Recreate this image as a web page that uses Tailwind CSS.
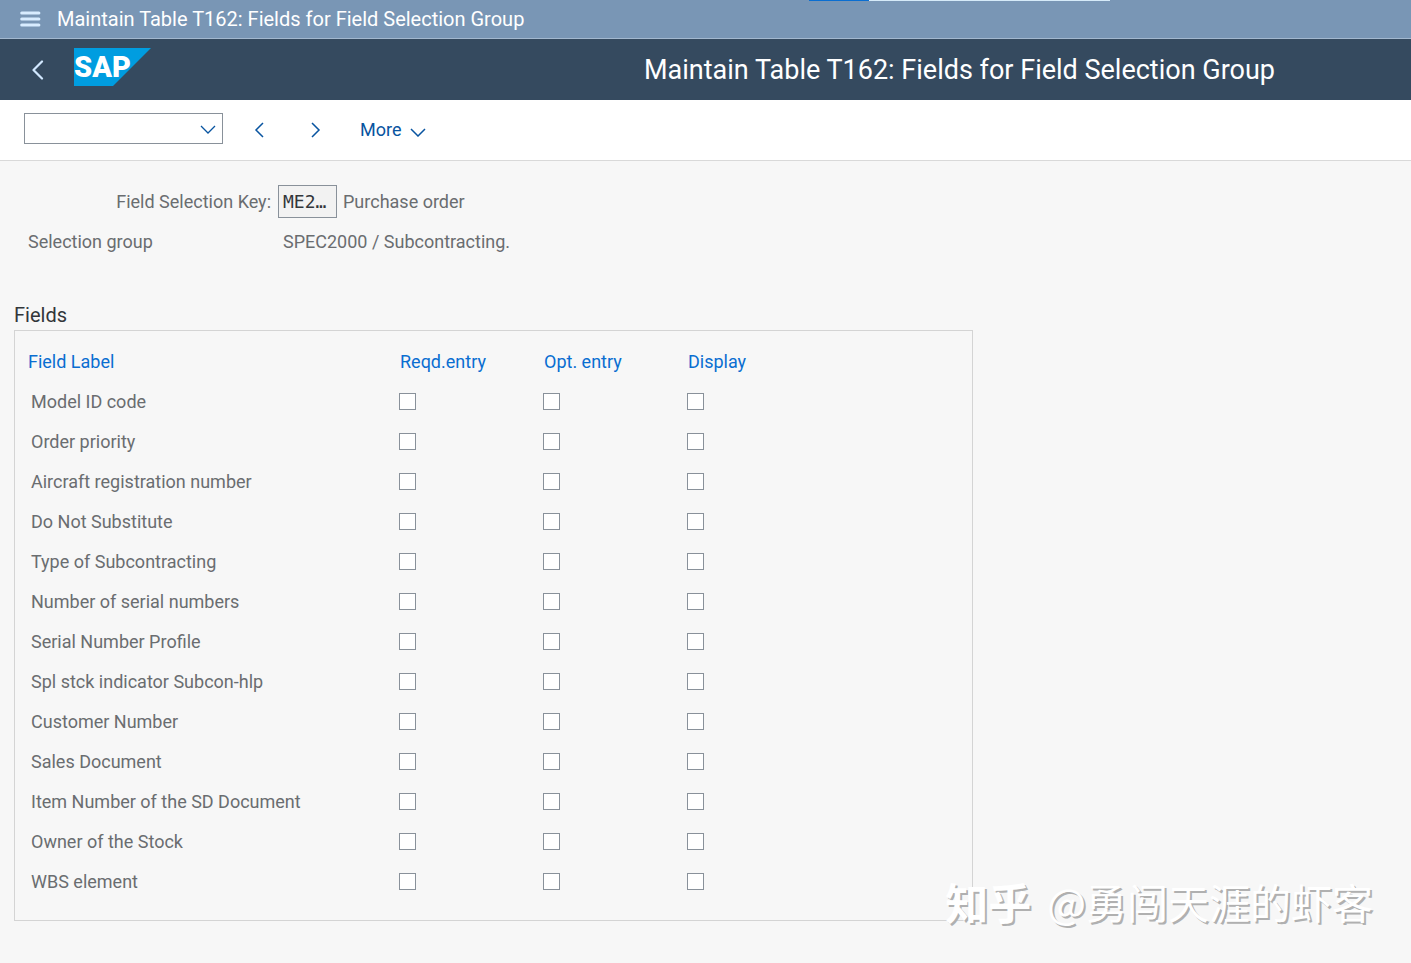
<!DOCTYPE html>
<html lang="en">
<head>
  <meta charset="UTF-8" />
  <meta name="viewport" content="width=device-width, initial-scale=1" />
  <title>Maintain Table T162: Fields for Field Selection Group</title>
  <script src="https://cdn.jsdelivr.net/npm/@tailwindcss/browser@4"></script>
</head>
<body class="bg-[#f7f7f7] min-h-screen font-['Roboto',sans-serif] text-lg leading-6 text-[#6a6d70]">

  <!-- Shell bar -->
  <div class="relative h-[39px] flex items-center gap-4 pl-5 bg-[#7996b5] border-b border-[#a3b8cf] text-white">
    <button type="button" aria-label="Menu" class="w-[21px]">
      <svg class="w-[21px] h-4" viewBox="0 0 21 16" fill="none" stroke="#d8ecff" stroke-width="3" stroke-linecap="round">
        <path d="M1.7 2h17.2M1.7 8h17.2M1.7 14h17.2" />
      </svg>
    </button>
    <span class="text-[20px]">Maintain Table T162: Fields for Field Selection Group</span>
    <div class="absolute top-0 left-[809px] flex">
      <div class="w-[60px] h-px bg-[#0a6ed1]"></div>
      <div class="w-[241px] h-px bg-[#d5eaf8]"></div>
    </div>
  </div>

  <!-- Header -->
  <header class="h-[61px] flex items-center bg-[#354a5f] text-white pl-7 pr-[132px]">
    <button type="button" aria-label="Back" class="w-5 h-6 flex items-center justify-center">
      <svg class="w-5 h-5" viewBox="0 0 20 20" fill="none" stroke="#d1e8ff" stroke-width="2.2" stroke-linecap="round" stroke-linejoin="round">
        <path d="M14 1.5L5.500 10L14 18.500" />
      </svg>
    </button>
    <svg class="ml-[26px] -mt-[6px] w-[77px] h-[38px]" viewBox="0 0 77 38" role="img" aria-label="SAP">
      <path d="M0 0h77L39 38H0z" fill="#009de0" />
      <text x="0" y="29" fill="#fff" class="font-['Roboto',sans-serif] font-black text-[29px]">SAP</text>
    </svg>
    <h1 class="ml-auto pr-1 text-[27px] leading-8">Maintain Table T162: Fields for Field Selection Group</h1>
  </header>

  <!-- Toolbar -->
  <div class="h-[61px] flex items-center bg-white border-b border-[#d9d9d9] pl-6 text-[#0854a0]">
    <div class="relative -mt-1">
      <select aria-label="Command" class="block appearance-none w-[199px] h-[31px] border border-[#89919a] bg-white px-2">
        <option></option>
      </select>
      <svg class="absolute right-[7px] top-3 w-4 h-[9px] pointer-events-none" viewBox="0 0 16 9" fill="none" stroke="currentColor" stroke-width="1.300">
        <path d="M1 1l7 7l7-7" />
      </svg>
    </div>
    <button type="button" aria-label="Previous" class="ml-[31px]">
      <svg class="w-[10px] h-4" viewBox="0 0 10 16" fill="none" stroke="currentColor" stroke-width="1.500">
        <path d="M9 1L2 8l7 7" />
      </svg>
    </button>
    <button type="button" aria-label="Next" class="ml-[47px]">
      <svg class="w-[10px] h-4" viewBox="0 0 10 16" fill="none" stroke="currentColor" stroke-width="1.500">
        <path d="M1 1l7 7l-7 7" />
      </svg>
    </button>
    <button type="button" class="ml-[39px] flex items-center gap-[9px]">
      More
      <svg class="mt-1 w-4 h-[9px]" viewBox="0 0 16 9" fill="none" stroke="currentColor" stroke-width="1.500">
        <path d="M1 1l7 7l7-7" />
      </svg>
    </button>
  </div>

  <main class="pl-[14px] pr-4 pt-5 pb-10">
    <div class="flex items-center h-[41px]">
      <label for="field-key" class="w-[257px] text-right">Field Selection Key:</label>
      <input id="field-key" type="text" readonly value="ME2…"
        class="ml-[7px] w-[59px] h-[33px] border border-[#89919a] bg-[#f2f2f2] px-1 font-['DejaVu_Sans_Mono',monospace] text-[#32363a]" />
      <span class="ml-[6px]">Purchase order</span>
    </div>
    <div class="flex items-center h-10 pl-[14px]">
      <span class="w-[255px]">Selection group</span>
      <span>SPEC2000 / Subcontracting.</span>
    </div>

    <section class="mt-10 max-w-[959px]">
      <h2 class="pb-[2px] text-[20px] leading-[26px] text-[#32363a]">Fields</h2>
      <div class="border border-[#d4d4d4] pt-[11px] pb-[18px] pl-[13px]">
        <table class="table-fixed w-full text-left">
          <colgroup>
            <col class="w-[371px]" />
            <col class="w-[144px]" />
            <col class="w-[144px]" />
            <col />
          </colgroup>
          <thead>
            <tr class="h-10 text-[#0a6ed1]">
              <th scope="col" class="p-0 font-normal">Field Label</th>
              <th scope="col" class="p-0 pl-px font-normal">Reqd.entry</th>
              <th scope="col" class="p-0 pl-px font-normal">Opt. entry</th>
              <th scope="col" class="p-0 pl-px font-normal">Display</th>
            </tr>
          </thead>
          <tbody id="fields"></tbody>
        </table>
      </div>
    </section>
  </main>

  <p class="absolute right-[38px] top-[871px] flex items-center gap-4 text-[41px] leading-[60px] whitespace-nowrap text-white font-['Noto_Sans_CJK_SC',sans-serif] [text-shadow:2px_2px_0_#b0b0b0]"><span class="text-[43px] font-bold">知乎</span><span>@勇闯天涯的虾客</span></p>

  <script>
    const fields = [
      'Model ID code',
      'Order priority',
      'Aircraft registration number',
      'Do Not Substitute',
      'Type of Subcontracting',
      'Number of serial numbers',
      'Serial Number Profile',
      'Spl stck indicator Subcon-hlp',
      'Customer Number',
      'Sales Document',
      'Item Number of the SD Document',
      'Owner of the Stock',
      'WBS element'
    ];
    const options = ['Reqd.entry', 'Opt. entry', 'Display'];

    document.getElementById('fields').innerHTML = fields.map((field) => `
      <tr class="h-10">
        <th scope="row" class="p-0 pl-[3px] font-normal">${field}</th>
        ${options.map((option) => `
          <td class="p-0 pb-[2px]">
            <input type="checkbox" aria-label="${field}: ${option}"
              class="block appearance-none w-[17px] h-[17px] border border-[#89919a] bg-white checked:bg-[#0854a0]" />
          </td>`).join('')}
      </tr>`).join('');
  </script>

</body>
</html>
